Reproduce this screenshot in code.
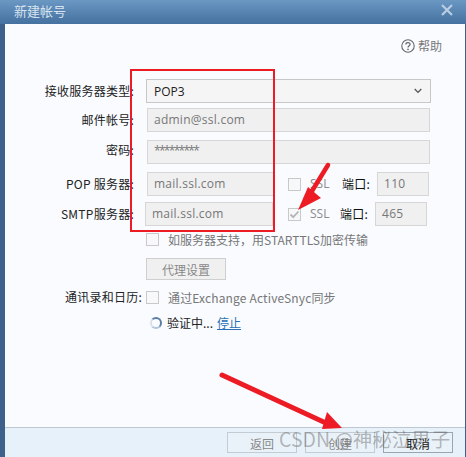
<template>
  <div class="window">
    <header class="titlebar">
      <span class="title">新建帐号</span>
      <svg class="close" width="12" height="12" viewBox="0 0 12 12"><path d="M1 1L11 11M11 1L1 11" stroke="#b9cde2" stroke-width="2.2" fill="none"/></svg>
    </header>
    <main class="body">
      <div class="help">
        <svg width="14" height="14" viewBox="0 0 14 14">
          <circle cx="7" cy="7" r="6.2" stroke="#666" stroke-width="1.1" fill="none"/>
          <path d="M4.9 5.4C4.9 3 9.1 3 9.1 5.3C9.1 6.8 7 6.7 7 8.5" stroke="#666" stroke-width="1.2" fill="none"/>
          <circle cx="7" cy="10.4" r="0.8" fill="#666"/>
        </svg>
        <span>帮助</span>
      </div>
      <div class="row r-select">
        <label class="label">接收服务器类型:</label>
        <div class="select">
          <span>POP3</span>
          <svg width="8" height="6" viewBox="0 0 8 6"><path d="M0.7 1L4 4.4L7.3 1" stroke="#555" stroke-width="1.3" fill="none"/></svg>
        </div>
      </div>
      <div class="row r-mail">
        <label class="label">邮件帐号:</label>
        <div class="input wide">admin@ssl.com</div>
      </div>
      <div class="row r-pass">
        <label class="label pass-label">密码:</label>
        <div class="input wide pw">*********</div>
      </div>
      <div class="row r-pop">
        <label class="label">POP 服务器:</label>
        <div class="input host">mail.ssl.com</div>
        <span class="check ssl-check"></span>
        <span class="ssl">SSL</span>
        <span class="port-label">端口:</span>
        <div class="input port">110</div>
      </div>
      <div class="row r-smtp">
        <label class="label">SMTP服务器:</label>
        <div class="input host">mail.ssl.com</div>
        <span class="check ssl-check">
          <svg width="11" height="9" viewBox="0 0 11 9"><path d="M1.5 4.5L4.2 7.2L9.5 1.5" stroke="#b5b5b5" stroke-width="1.8" fill="none"/></svg>
        </span>
        <span class="ssl">SSL</span>
        <span class="port-label">端口:</span>
        <div class="input port">465</div>
      </div>
      <div class="row r-tls">
        <span class="label"></span>
        <span class="check"></span>
        <span class="muted tls">如服务器支持，用STARTTLS加密传输</span>
      </div>
      <div class="row r-proxy">
        <span class="label"></span>
        <button class="proxy">代理设置</button>
      </div>
      <div class="row r-sync">
        <label class="label sync-label">通讯录和日历:</label>
        <span class="check"></span>
        <span class="muted">通过Exchange ActiveSnyc同步</span>
      </div>
      <div class="row r-status">
        <span class="label"></span>
        <span class="spinner"></span>
        <span class="status">验证中...</span>
        <a class="stop">停止</a>
      </div>
    </main>
    <footer class="footer">
      <button class="btn off">返回</button>
      <button class="btn off">创建</button>
      <button class="btn">取消</button>
    </footer>

    <div class="redbox"></div>
    <svg class="arrows" width="466" height="457" viewBox="0 0 466 457">
      <path d="M328 165L312 191" stroke="#ed1c24" stroke-width="4.5" stroke-linecap="round" fill="none"/>
      <path d="M298 210L308 187L321 198Z" fill="#ed1c24"/>
      <path d="M222 375L328 424" stroke="#ed1c24" stroke-width="5" stroke-linecap="round" fill="none"/>
      <path d="M342 428L327 412L322 429Z" fill="#ed1c24"/>
    </svg>
    <div class="watermark">CSDN @神秘泣男子</div>
  </div>
</template>

<style scoped>
.window {
  position: relative;
  width: 466px;
  height: 457px;
  overflow: hidden;
  display: flex;
  flex-direction: column;
  background: #3d618b;
  font-family: "Noto Sans CJK SC", "Open Sans", sans-serif;
  font-size: 12px;
  color: #222;
}
.titlebar {
  flex: 0 0 24px;
  box-sizing: border-box;
  display: flex;
  align-items: center;
  justify-content: space-between;
  padding: 0 13px 4px 14px;
  background: linear-gradient(#6b97c3, #44719f);
  color: #d7e3ef;
  font-size: 13px;
}
.body {
  flex: 1;
  margin: 0 1px 0 5px;
  background: #f9fbff;
  position: relative;
  padding-top: 12px;
}
.help {
  position: absolute;
  top: 13px;
  right: 23px;
  display: flex;
  align-items: center;
  gap: 3px;
  color: #777;
  font-size: 12px;
}
.row {
  display: flex;
  align-items: center;
}
.label {
  flex: 0 0 129px;
  text-align: right;
  white-space: nowrap;
  color: #222;
  letter-spacing: 0.25px;
  padding-bottom: 2px;
  box-sizing: border-box;
}
.pass-label { padding-bottom: 5px; }
.sync-label {
  flex-basis: 137px;
  margin-right: -8px;
}
.r-select { margin-top: 43px; height: 24px; }
.r-mail { margin-top: 5px; height: 24px; }
.r-pass { margin-top: 8px; height: 24px; }
.r-pop { margin-top: 8px; height: 24px; }
.r-smtp { margin-top: 6px; height: 24px; }
.r-tls { margin-top: 7px; height: 13px; }
.r-proxy { margin-top: 12px; height: 22px; }
.r-sync { margin-top: 11px; height: 13px; }
.r-status { margin-top: 12px; height: 13px; }
.select {
  box-sizing: border-box;
  width: 285px;
  height: 24px;
  margin-left: 12px;
  padding: 0 8px 0 7px;
  display: flex;
  align-items: center;
  justify-content: space-between;
  background: #f5f5f5;
  border: 1px solid #c8c8c8;
  font-family: "Open Sans", sans-serif;
  font-size: 12px;
  color: #222;
}
.input {
  box-sizing: border-box;
  height: 24px;
  padding: 0 6px 2px;
  display: flex;
  align-items: center;
  background: #f0f0f0;
  border: 1px solid #d6d6d6;
  font-family: "Open Sans", sans-serif;
  font-size: 12px;
  letter-spacing: 0.25px;
  color: #777;
  margin-left: 13px;
}
.wide { width: 283px; }
.pw { letter-spacing: -1.7px; padding-bottom: 3px; }
.host { width: 128px; }
.r-smtp .host { margin-left: 11px; }
.port { width: 52px; padding-left: 6px; margin-left: 7px; }
.check {
  box-sizing: border-box;
  flex: 0 0 13px;
  width: 13px;
  height: 13px;
  margin-left: 12px;
  background: #f7f8fa;
  border: 1px solid #c9c9c9;
  display: flex;
  align-items: center;
  justify-content: center;
}
.ssl-check { margin-left: 13px; }
.r-smtp .ssl-check { margin-left: 15px; }
.ssl {
  margin-left: 9px;
  width: 20px;
  color: #8a8a8a;
  font-family: "Open Sans", sans-serif;
  font-size: 12px;
  padding-bottom: 2px;
}
.port-label {
  margin-left: 12px;
  color: #111;
  white-space: nowrap;
  letter-spacing: 0.25px;
  padding-bottom: 2px;
}
.r-smtp .port-label { margin-left: 10px; }
.muted {
  margin-left: 9px;
  color: #777;
  white-space: nowrap;
  letter-spacing: 0.15px;
}
.muted.tls { letter-spacing: 0; }
.proxy {
  box-sizing: border-box;
  width: 80px;
  height: 22px;
  margin-left: 12px;
  background: #f0f0f0;
  border: 1px solid #cfcfcf;
  font: inherit;
  color: #888;
  padding: 0;
}
.spinner {
  box-sizing: border-box;
  width: 12px;
  height: 12px;
  margin-left: 16px;
  border: 2px solid #5c7ea6;
  border-left-color: #d7e1ec;
  border-bottom-color: #b4c6da;
  border-radius: 50%;
}
.status { margin-left: 5px; color: #222; }
.stop { margin-left: 4px; color: #2a6fb5; text-decoration: underline; }
.footer {
  flex: 0 0 30px;
  box-sizing: border-box;
  margin: 0 1px 0 5px;
  padding: 4px 12px 0 0;
  display: flex;
  justify-content: flex-end;
  align-items: flex-start;
  gap: 8px;
  background: #e6f1f9;
  border-top: 1px solid #bfc8d2;
}
.btn {
  box-sizing: border-box;
  width: 70px;
  height: 21px;
  padding: 2px 0 0;
  background: #eaf2f9;
  border: 1px solid #9aa5af;
  font: inherit;
  color: #111;
}
.btn.off { color: #888; border-color: #c4ccd3; }
.redbox {
  position: absolute;
  left: 130px;
  top: 69px;
  width: 141px;
  height: 159px;
  border: 2px solid #ed1c24;
}
.arrows {
  position: absolute;
  left: 0;
  top: 0;
  pointer-events: none;
}
.watermark {
  position: absolute;
  left: 279px;
  bottom: 6px;
  font-size: 19.5px;
  line-height: 24px;
  color: rgba(90, 90, 90, 0.42);
  white-space: nowrap;
}
</style>
